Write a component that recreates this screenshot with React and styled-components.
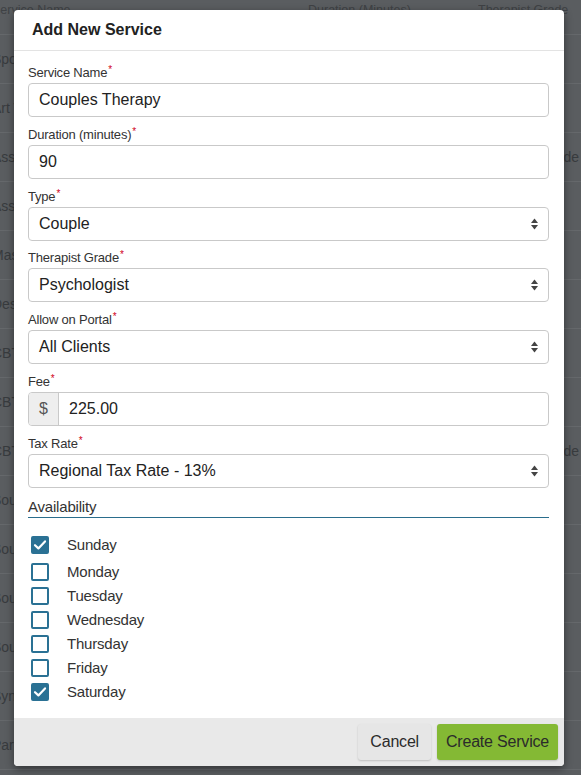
import React from "react";
import styled, { createGlobalStyle } from "styled-components";

const GlobalStyle = createGlobalStyle`
  html, body { margin: 0; padding: 0; }
  body { font-family: "Liberation Sans", Arial, Helvetica, sans-serif; }
  * { box-sizing: border-box; }
`;

const Page = styled.div`
  position: relative;
  width: 581px;
  height: 775px;
  overflow: hidden;
  background: #5a5d60;
`;

const BgTable = styled.div`
  margin-top: -14px;
  margin-left: -8px;
`;

const BgRow = styled.div`
  display: grid;
  grid-template-columns: 316px 170px 1fr;
  height: 49px;
  align-items: center;
  border-bottom: 1px solid #65686b;
  color: ${(p) => (p.$head ? "#3f4245" : "#383b3e")};
  font-size: ${(p) => (p.$head ? "12.5px" : "14px")};
  white-space: nowrap;
`;

const BgCell = styled.div`
  overflow: hidden;
  max-width: ${(p) => p.$clip || "none"};
`;

const Modal = styled.div`
  position: absolute;
  top: 10px;
  left: 14px;
  width: 550px;
  background: #fff;
  border-radius: 4px;
  overflow: hidden;
  box-shadow: 0 3px 9px rgba(0, 0, 0, 0.45);
`;

const Header = styled.div`
  height: 41px;
  display: flex;
  align-items: center;
  padding-left: 18px;
  border-bottom: 1px solid #e3e3e3;
`;

const Title = styled.h4`
  margin: 0;
  font-size: 16px;
  font-weight: 700;
  color: #222;
`;

const Body = styled.div`
  padding: 13px 15px 14px 14px;
`;

const Field = styled.div`
  margin-bottom: 8.83px;
`;

const Label = styled.label`
  display: block;
  font-size: 13px;
  line-height: 17px;
  margin-bottom: 2px;
  color: #333;
  letter-spacing: -0.2px;
`;

const Req = styled.span`
  color: #d0021b;
  font-size: 10px;
  vertical-align: top;
  line-height: 12px;
  margin-left: 1px;
`;

const Control = styled.div`
  display: flex;
  align-items: center;
  height: 34px;
  border: 1px solid #c9c9c9;
  border-radius: 4px;
  font-size: 16px;
  color: #222;
  overflow: hidden;
`;

const Value = styled.span`
  flex: 1;
  padding: 0 10px;
`;

const Arrows = styled.svg`
  margin-right: 10px;
  flex: none;
`;

const Addon = styled.span`
  width: 30px;
  height: 100%;
  display: flex;
  align-items: center;
  justify-content: center;
  background: #eee;
  border-right: 1px solid #c9c9c9;
  color: #555;
  font-size: 16px;
`;

const Legend = styled.div`
  margin-top: 3px;
  font-size: 15px;
  line-height: 20px;
  color: #333;
  border-bottom: 1px solid #2a6d8c;
  letter-spacing: -0.2px;
`;

const DayList = styled.div`
  margin-top: 15px;
  display: flex;
  flex-direction: column;
`;

const DayRow = styled.div`
  display: flex;
  align-items: center;
  height: 24px;
  &:first-child {
    margin-bottom: 3px;
  }
`;

const Box = styled.span`
  width: 18px;
  height: 18px;
  margin-left: 3px;
  border-radius: 2px;
  border: 2px solid #2a7194;
  background: ${(p) => (p.$on ? "#2a7194" : "#fff")};
  display: flex;
  align-items: center;
  justify-content: center;
`;

const DayName = styled.span`
  margin-left: 18px;
  font-size: 15px;
  color: #333;
  letter-spacing: -0.2px;
`;

const Footer = styled.div`
  height: 48px;
  background: #e9e9e9;
  display: flex;
  justify-content: flex-end;
  align-items: center;
  gap: 6px;
  padding-right: 6px;
`;

const Button = styled.button`
  height: 36px;
  border: none;
  border-radius: 3px;
  padding: 0 ${(p) => (p.$primary ? "9px" : "12px")};
  font-family: inherit;
  font-size: 16px;
  color: #2b2b2b;
  background: ${(p) => (p.$primary ? "#84b934" : "#e6e6e6")};
  box-shadow: 0 1px 2px rgba(0, 0, 0, 0.18);
  letter-spacing: -0.2px;
`;

const SelectArrows = () => (
  <Arrows width="7" height="12" viewBox="0 0 7 12">
    <polygon points="0,5 3.5,0.5 7,5" fill="#444" />
    <polygon points="0,7 7,7 3.5,11.5" fill="#444" />
  </Arrows>
);

const Check = () => (
  <svg width="14" height="14" viewBox="0 0 14 14">
    <path d="M2 7.2 L5.4 10.4 L12 3.4" fill="none" stroke="#fff" strokeWidth="2.2" strokeLinecap="round" strokeLinejoin="round" />
  </svg>
);

const bgRows = [
  ["Spouse Session", ""],
  ["Art Therapy", ""],
  ["Assessment", "Therapist Grade"],
  ["Assessment - Child", ""],
  ["Massage Therapy", ""],
  ["Desensitization", ""],
  ["CBT", ""],
  ["CBT - Group", ""],
  ["CBT - Couples", "Therapist Grade"],
  ["Sound Therapy", ""],
  ["Sound Healing", ""],
  ["Sound Session", ""],
  ["Sound Group", ""],
  ["Synergy", ""],
  ["Partner Session", ""],
];

const days = [
  ["Sunday", true],
  ["Monday", false],
  ["Tuesday", false],
  ["Wednesday", false],
  ["Thursday", false],
  ["Friday", false],
  ["Saturday", true],
];

const fields = [
  { label: "Service Name", value: "Couples Therapy" },
  { label: "Duration (minutes)", value: "90" },
  { label: "Type", value: "Couple", select: true },
  { label: "Therapist Grade", value: "Psychologist", select: true },
  { label: "Allow on Portal", value: "All Clients", select: true },
  { label: "Fee", value: "225.00", addon: "$" },
  { label: "Tax Rate", value: "Regional Tax Rate - 13%", select: true },
];

export default function App() {
  return (
    <>
      <GlobalStyle />
      <Page>
        <BgTable>
          <BgRow $head>
            <BgCell>Service Name</BgCell>
            <BgCell>Duration (Minutes)</BgCell>
            <BgCell>Therapist Grade</BgCell>
          </BgRow>
          {bgRows.map((r, i) => (
            <BgRow key={i}>
              <BgCell $clip="24px">{r[0]}</BgCell>
              <BgCell />
              <BgCell>{r[1]}</BgCell>
            </BgRow>
          ))}
        </BgTable>

        <Modal>
          <Header>
            <Title>Add New Service</Title>
          </Header>
          <Body>
            {fields.map((f) => (
              <Field key={f.label}>
                <Label>
                  {f.label}
                  <Req>*</Req>
                </Label>
                <Control>
                  {f.addon && <Addon>{f.addon}</Addon>}
                  <Value>{f.value}</Value>
                  {f.select && <SelectArrows />}
                </Control>
              </Field>
            ))}
            <Legend>Availability</Legend>
            <DayList>
              {days.map(([d, on]) => (
                <DayRow key={d}>
                  <Box $on={on}>{on && <Check />}</Box>
                  <DayName>{d}</DayName>
                </DayRow>
              ))}
            </DayList>
          </Body>
          <Footer>
            <Button>Cancel</Button>
            <Button $primary>Create Service</Button>
          </Footer>
        </Modal>
      </Page>
    </>
  );
}
